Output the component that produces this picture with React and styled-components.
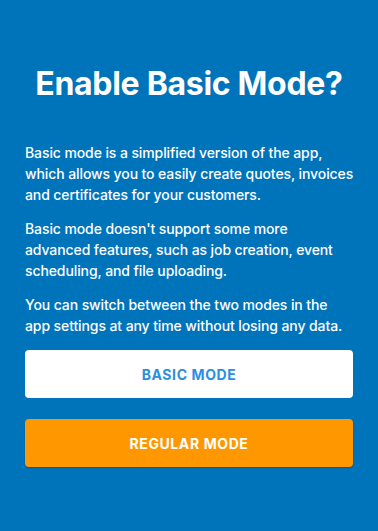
import styled, { createGlobalStyle } from 'styled-components';

const Global = createGlobalStyle`
  html, body {
    margin: 0;
    padding: 0;
    background: #0074bb;
  }
  * { box-sizing: border-box; }
`

const Screen = styled.div`
  width: 378px;
  height: 531px;
  background: #0074bb;
  padding: 62px 25px 0;
  font-family: Inter, "Noto Sans", sans-serif;
  color: #ffffff;
  display: flex;
  flex-direction: column;
`

const Title = styled.h1`
  margin: 0 0 36px;
  font-size: 32px;
  font-weight: 700;
  line-height: 44px;
  text-align: center;
  letter-spacing: -0.3px;
`

const Para = styled.p`
  margin: 0 -3px 13px 0;
  font-size: 14px;
  line-height: 21px;
  font-weight: 500;
  letter-spacing: -0.1px;
  white-space: nowrap;
`

const Buttons = styled.div`
  display: flex;
  flex-direction: column;
  gap: 21px;
  margin-top: 1px;
`

const Button = styled.button`
  height: 48px;
  width: 100%;
  border: none;
  border-radius: 4px;
  font-family: inherit;
  font-size: 14px;
  font-weight: 700;
  letter-spacing: 0.6px;
  text-transform: uppercase;
  background: ${(p) => (p.$primary ? '#ff9800' : '#ffffff')};
  color: ${(p) => (p.$primary ? '#ffffff' : '#2b8ee0')};
  box-shadow: ${(p) => (p.$primary ? '0 1px 2px rgba(0,0,0,0.25)' : 'none')};
`

function App() {
  return (
    <>
      <Global />
      <Screen>
        <Title>Enable Basic Mode?</Title>
        <Para>
          Basic mode is a simplified version of the app,<br />
          which allows you to easily create quotes, invoices<br />
          and certificates for your customers.
        </Para>
        <Para>
          Basic mode doesn't support some more<br />
          advanced features, such as job creation, event<br />
          scheduling, and file uploading.
        </Para>
        <Para>
          You can switch between the two modes in the<br />
          app settings at any time without losing any data.
        </Para>
        <Buttons>
          <Button>Basic mode</Button>
          <Button $primary>Regular mode</Button>
        </Buttons>
      </Screen>
    </>
  )
}

export default App
